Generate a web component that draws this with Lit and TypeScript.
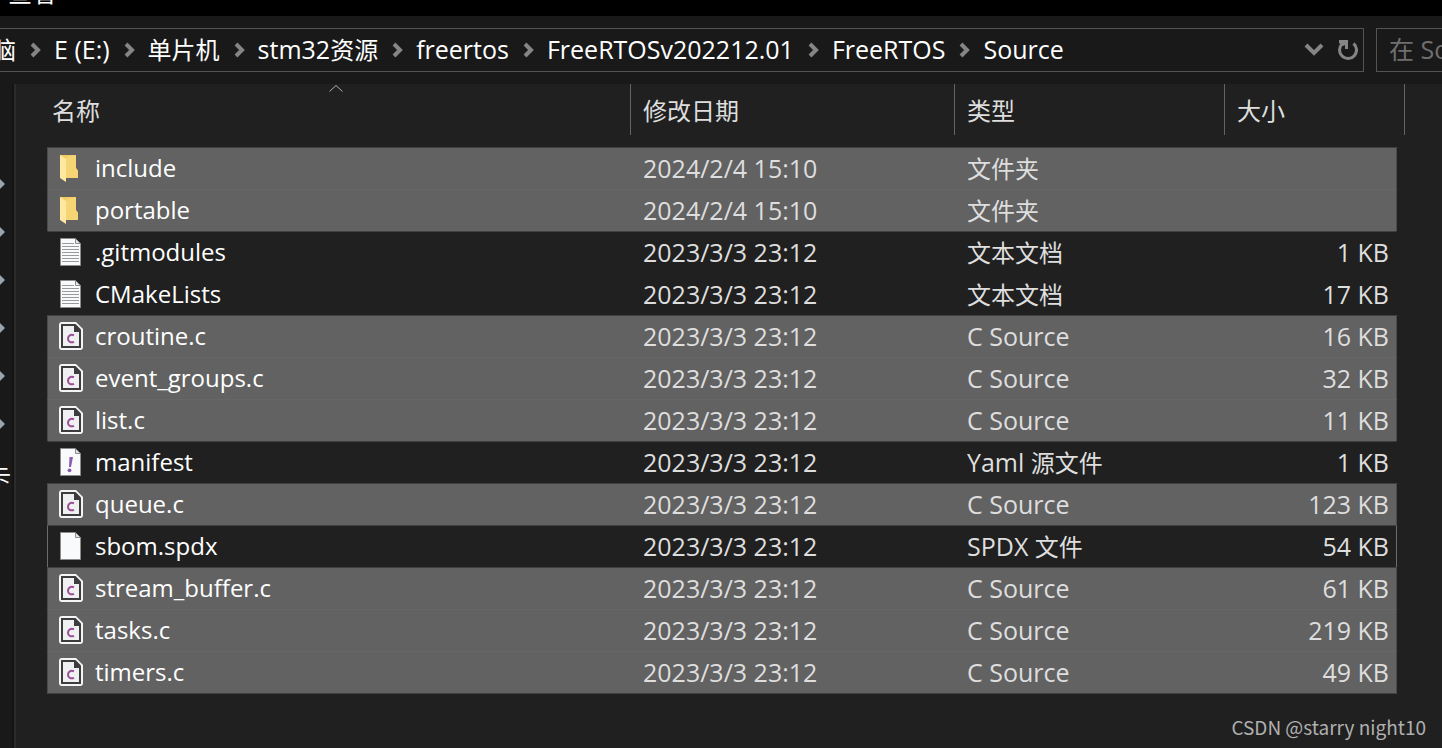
import { LitElement, html, css, svg, nothing } from "lit";
import { customElement, property } from "lit/decorators.js";

type Kind = "folder" | "text" | "c" | "yaml" | "blank";

interface Entry {
  name: string;
  kind: Kind;
  date: string;
  type: string;
  size: string;
  selected: boolean;
  focused?: boolean;
}

const OLD = "2023/3/3 23:12";
const entries: Entry[] = [
  { name: "include", kind: "folder", date: "2024/2/4 15:10", type: "文件夹", size: "", selected: true },
  { name: "portable", kind: "folder", date: "2024/2/4 15:10", type: "文件夹", size: "", selected: true },
  { name: ".gitmodules", kind: "text", date: OLD, type: "文本文档", size: "1 KB", selected: false },
  { name: "CMakeLists", kind: "text", date: OLD, type: "文本文档", size: "17 KB", selected: false },
  { name: "croutine.c", kind: "c", date: OLD, type: "C Source", size: "16 KB", selected: true },
  { name: "event_groups.c", kind: "c", date: OLD, type: "C Source", size: "32 KB", selected: true },
  { name: "list.c", kind: "c", date: OLD, type: "C Source", size: "11 KB", selected: true },
  { name: "manifest", kind: "yaml", date: OLD, type: "Yaml 源文件", size: "1 KB", selected: false },
  { name: "queue.c", kind: "c", date: OLD, type: "C Source", size: "123 KB", selected: true },
  { name: "sbom.spdx", kind: "blank", date: OLD, type: "SPDX 文件", size: "54 KB", selected: false, focused: true },
  { name: "stream_buffer.c", kind: "c", date: OLD, type: "C Source", size: "61 KB", selected: true },
  { name: "tasks.c", kind: "c", date: OLD, type: "C Source", size: "219 KB", selected: true },
  { name: "timers.c", kind: "c", date: OLD, type: "C Source", size: "49 KB", selected: true },
];

const crumbs = ["此电脑", "E (E:)", "单片机", "stm32资源", "freertos", "FreeRTOSv202212.01", "FreeRTOS", "Source"];

/* Chinese runs are set a little smaller than Latin ones. */
const runs = (text: string) =>
  text
    .split(/([\u4e00-\u9fff]+)/)
    .filter(Boolean)
    .map((part) => (/[\u4e00-\u9fff]/.test(part) ? html`<span class="han">${part}</span>` : part));

@customElement("file-icon")
export class FileIcon extends LitElement {
  @property() kind: Kind = "blank";

  static styles = css`
    :host { display: block; width: 24px; height: 30px; }
    .icon { display: block; }
  `;

  private page() {
    return svg`
      <path d="M1.5 1.5H16L21.5 7V28.500H1.500Z" fill="#f8fafb" stroke="#8c8c8c"/>
      <path d="M16.500 1.500V6.500H21.500Z" fill="#e4e4e4" stroke="#8c8c8c"/>`;
  }

  private shape() {
    switch (this.kind) {
      case "folder":
        return svg`
          <path d="M1 2H17V15L19 18V25H6L1 24Z" fill="#f2cb62"/>
          <path d="M17 15L19 18V25H7V4L17 2Z" fill="#f6d575"/>
          <path d="M1 2L7 6V29L1 25Z" fill="#ffe9a2"/>`;
      case "text":
        return svg`${this.page()}
          <path d="M3 6.500H15M3 9.500H20M3 12.500H20M3 15.500H20M3 18.500H20M3 21.500H20M3 24.500H20" stroke="#9a9a9a"/>`;
      case "c":
        return svg`
          <path d="M3 1H17L24 8V26Q24 29 21 29H3Q0 29 0 26V4Q0 1 3 1Z" fill="#f5f5f5"/>
          <path d="M2 3H16.500L22 8.500V27H2Z" fill="#3c3c3f"/>
          <path d="M4 5H15V11H20V25H4Z" fill="#f0eff1"/>
          <path d="M15 14.300C11.800 13 9 14.600 9 17.700C9 20.800 11.800 22.200 15 20.800" fill="none" stroke="#9b4f96" stroke-width="2"/>`;
      case "yaml":
        return svg`${this.page()}
          <path d="M10.500 10H14L12 20H10Z" fill="#8a5cb0"/>
          <circle cx="10.500" cy="23.300" r="1.900" fill="#8a5cb0"/>`;
      default:
        return this.page();
    }
  }

  render() {
    return html`<svg class="icon" width="24" height="30" viewBox="0 0 24 30" aria-hidden="true">${this.shape()}</svg>`;
  }
}

@customElement("app-root")
export class AppRoot extends LitElement {
  static styles = css`
    * { box-sizing: border-box; }
    :host {
      display: flex;
      flex-direction: column;
      position: relative;
      height: 100vh;
      overflow: hidden;
      background: #202020;
      color: #fff;
      font: 25px/32px "Open Sans", "Noto Sans CJK SC", sans-serif;
    }
    button, input { font: inherit; color: inherit; background: none; border: 0; padding: 0; margin: 0; }
    .han { font-family: "Noto Sans CJK SC", sans-serif; font-size: 24px; }
    .tabs { flex: none; display: flex; align-items: flex-end; height: 16px; padding: 0 8px 8px; background: #000; }
    .tab { height: 32px; line-height: 32px; }
    .toolbar { flex: none; display: flex; gap: 12px; height: 68px; padding: 12px 0; background: #191919; overflow: hidden; }
    .address { flex: 1; min-width: 0; display: flex; align-items: center; border: 1px solid #535353; border-left: 0; }
    .crumbs { flex: 1; min-width: 0; display: flex; align-items: center; list-style: none; margin: 0 0 0 -56px; padding: 0; overflow: hidden; }
    .crumb { display: flex; align-items: center; white-space: nowrap; }
    .link { color: inherit; text-decoration: none; padding-bottom: 2px; }
    .sep { width: 11px; height: 16px; margin: 0 13px 0 14px; }
    .tool { display: grid; place-items: center; height: 100%; width: 32px; }
    .drop { width: 34px; }
    .search { flex: none; width: 360px; margin-right: -294px; border: 1px solid #535353; padding: 0 12px 2px; }
    .search::placeholder { color: #6f6f6f; opacity: 1; }
    .body { flex: 1; min-height: 0; display: flex; }
    .nav { flex: none; width: 16px; background: #191919; border-right: 2px solid #2b2b2b; box-shadow: inset -2px 0 #141414; overflow: hidden; }
    .pins { display: flex; flex-direction: column; gap: 36px; margin: 0; padding: 94px 0 0; list-style: none; }
    .pin { display: block; width: 6px; height: 12px; }
    .drive { display: flex; justify-content: flex-end; width: 11px; padding-top: 29px; white-space: nowrap; }
    .list { flex: 1; min-width: 0; padding-right: 45px; }
    .table { width: 100%; border-collapse: separate; border-spacing: 0; table-layout: fixed; }
    .col-pad { width: 31px; }
    .col-date { width: 324px; }
    .col-type { width: 270px; }
    .col-size { width: 172px; }
    .head { position: relative; height: 63px; padding: 0 0 12px; text-align: left; vertical-align: top; font-weight: 400; color: #dedede; }
    .label { display: block; height: 51px; padding: 10px 12px; line-height: 32px; border-left: 1px solid #636363; margin-left: -1px; }
    .first { border: 0; padding-left: 5px; margin: 0; }
    .end { position: absolute; left: 179px; top: 0; width: 1px; height: 51px; background: #636363; }
    .sort { position: absolute; left: 282px; top: 0; }
    .cell { height: 42px; padding: 0 12px 2px; white-space: nowrap; color: #dedede; border-top: 1px solid transparent; }
    .name { padding: 0 0 2px 11px; color: #fff; font-size: 24px; border-left: 1px solid transparent; }
    .file { display: flex; align-items: center; gap: 12px; }
    .size { text-align: right; padding: 0 7px 2px 0; border-right: 1px solid transparent; }
    .selected .cell { background: #626262; border-color: #666; }
    .starts .cell, .after .cell { border-top-color: #404040; }
    .selected .name { border-left-color: #4a4a4a; }
    .selected .size { border-right-color: #4a4a4a; }
    .selected:last-child .cell { height: 43px; border-bottom: 1px solid #404040; }
    .focused .name { border-left-color: #6b6b6b; }
    .focused .size { border-right-color: #6b6b6b; }
    .mark { position: absolute; right: 16px; bottom: 9px; font: 19px/24px "Noto Sans CJK SC", sans-serif; color: #b0b0b0; }
  `;

  private crumb(text: string, i: number) {
    return html`<li class="crumb">
      <a class="link" href="#">${runs(text)}</a>
      ${i < crumbs.length - 1
        ? html`<svg class="sep" viewBox="0 0 11 16" aria-hidden="true"><path d="M2 2L8 8L2 14" fill="none" stroke="#858585" stroke-width="4"/></svg>`
        : nothing}
    </li>`;
  }

  private row(e: Entry, i: number) {
    const prev = i > 0 && entries[i - 1].selected;
    const cls = [e.selected ? "selected" : "", e.selected && !prev ? "starts" : "", !e.selected && prev ? "after" : "", e.focused ? "focused" : ""].join(" ");
    return html`<tr class=${cls}>
      <td></td>
      <td class="cell name"><div class="file"><file-icon .kind=${e.kind}></file-icon><span>${e.name}</span></div></td>
      <td class="cell">${e.date}</td>
      <td class="cell">${runs(e.type)}</td>
      <td class="cell size">${e.size}</td>
    </tr>`;
  }

  render() {
    return html`
      <div class="tabs"><span class="tab">${runs("查看")}</span></div>
      <div class="toolbar">
        <div class="address">
          <ol class="crumbs">${crumbs.map((c, i) => this.crumb(c, i))}</ol>
          <button class="tool drop" aria-label="历史记录">
            <svg width="20" height="14" viewBox="0 0 20 14"><path d="M2 2L10 10L18 2" fill="none" stroke="#858585" stroke-width="4"/></svg>
          </button>
          <button class="tool" aria-label="刷新">
            <svg width="22" height="22" viewBox="0 0 22 22"><path d="M17.500 4.500A8.500 8.500 0 1 1 6 5" fill="none" stroke="#858585" stroke-width="3"/><path d="M3 1H12V10H9V6L7 7L3 4Z" fill="#858585"/></svg>
          </button>
        </div>
        <input class="search" type="search" placeholder="在 Source 中搜索" aria-label="搜索" />
      </div>
      <div class="body">
        <nav class="nav">
          <ul class="pins">
            ${[0, 1, 2, 3, 4, 5].map(() => html`<li><svg class="pin" viewBox="0 0 6 12"><path d="M0 1L5 6L0 11Z" fill="#9aa4ab"/></svg></li>`)}
          </ul>
          <div class="drive">${runs("卡")}</div>
        </nav>
        <main class="list">
          <table class="table">
            <colgroup><col class="col-pad" /><col /><col class="col-date" /><col class="col-type" /><col class="col-size" /></colgroup>
            <thead>
              <tr>
                <td></td>
                <th class="head"><span class="label first">${runs("名称")}</span>
                  <svg class="sort" width="14" height="9" viewBox="0 0 14 9" aria-hidden="true"><path d="M.5 7.500L7 1.500L13.500 7.500" fill="none" stroke="#b0b0b0"/></svg></th>
                <th class="head"><span class="label">${runs("修改日期")}</span></th>
                <th class="head"><span class="label">${runs("类型")}</span></th>
                <th class="head"><span class="label">${runs("大小")}</span><span class="end"></span></th>
              </tr>
            </thead>
            <tbody>${entries.map((e, i) => this.row(e, i))}</tbody>
          </table>
        </main>
      </div>
      <div class="mark">CSDN @starry night10</div>
    `;
  }
}
